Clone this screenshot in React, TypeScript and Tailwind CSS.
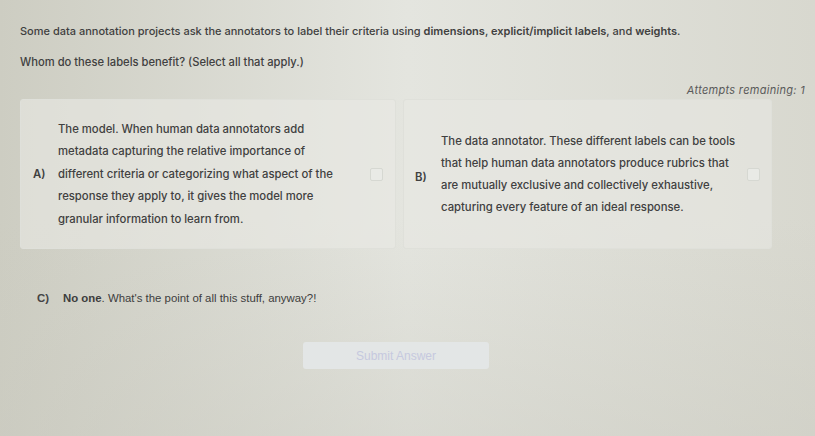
import React from 'react';

const textFont = { fontFamily: 'Inter, "Open Sans", sans-serif' };

function Checkbox() {
  return <div className="h-[13px] w-[13px] shrink-0 rounded-[2px] border border-[#d6d8d2] bg-[#e9eae6]" />;
}

export default function App() {
  return (
    <div
      className="relative h-[436px] w-[815px] overflow-hidden bg-gradient-to-r from-[#cdcdc2] via-[#e4e5df] to-[#d8d8cf] text-[#404040]"
      style={textFont}
    >
      <div className="pointer-events-none absolute inset-0 bg-gradient-to-b from-transparent via-transparent to-[#c9c9bf]/40" />
      <div className="relative pl-[20px] pt-[23px]">
        {/* Question */}
        <p className="text-[11px] font-medium leading-[16px]">
          Some data annotation projects ask the annotators to label their criteria using <span className="font-semibold">dimensions</span>, <span className="font-semibold">explicit/implicit labels</span>, and <span className="font-semibold">weights</span>.
        </p>
        <p className="mt-[15px] text-[11.2px] font-medium leading-[16px]">Whom do these labels benefit? (Select all that apply.)</p>

        <div className="mt-[14px] flex w-[785px] justify-end">
          <span className="text-[11px] italic leading-[12px] tracking-[0.3px] text-[#5a5a5a]">Attempts remaining: 1</span>
        </div>

        {/* Options A / B */}
        <div className="mt-[3px] grid w-[752px] grid-cols-[376px_369px] gap-[7px]">
          <div className="flex h-[150px] items-center rounded-[3px] border border-[#dfe0da] bg-[#e9eae5]/60 pl-[12px] pr-[12px]">
            <span className="w-[25px] shrink-0 text-[11.3px] font-semibold">A)</span>
            <p className="w-[292px] text-[11.3px] font-medium leading-[22.5px]">
              The model. When human data annotators add metadata capturing the relative importance of different criteria or categorizing what aspect of the response they apply to, it gives the model more granular information to learn from.
            </p>
            <div className="ml-auto">
              <Checkbox />
            </div>
          </div>
          <div className="flex h-[150px] items-center rounded-[3px] border border-[#dfe0da] bg-[#e7e8e2]/60 pl-[11px] pr-[11px]">
            <span className="w-[26px] shrink-0 pt-[6px] text-[11.3px] font-semibold">B)</span>
            <p className="w-[300px] text-[11.3px] font-medium leading-[22px]">
              The data annotator. These different labels can be tools that help human data annotators produce rubrics that are mutually exclusive and collectively exhaustive, capturing every feature of an ideal response.
            </p>
            <div className="ml-auto">
              <Checkbox />
            </div>
          </div>
        </div>

        {/* Option C */}
        <div className="mt-[42px] flex items-center pl-[17px] text-[11.4px] leading-[14px]" style={{ fontFamily: '"Liberation Sans", Arial, sans-serif' }}>
          <span className="w-[26px] shrink-0 font-bold text-[#444]">C)</span>
          <p className="text-[#3d3d3d]">
            <span className="font-bold">No one</span>. What's the point of all this stuff, anyway?!
          </p>
        </div>

        {/* Submit */}
        <div className="mt-[37px] flex w-[752px] justify-center">
          <button
            className="h-[27px] w-[186px] rounded-[3px] bg-[#e3e6e6] text-[12px] text-[#c6c9df]"
            style={{ fontFamily: '"Liberation Sans", Arial, sans-serif' }}
          >
            Submit Answer
          </button>
        </div>
      </div>
    </div>
  );
}
